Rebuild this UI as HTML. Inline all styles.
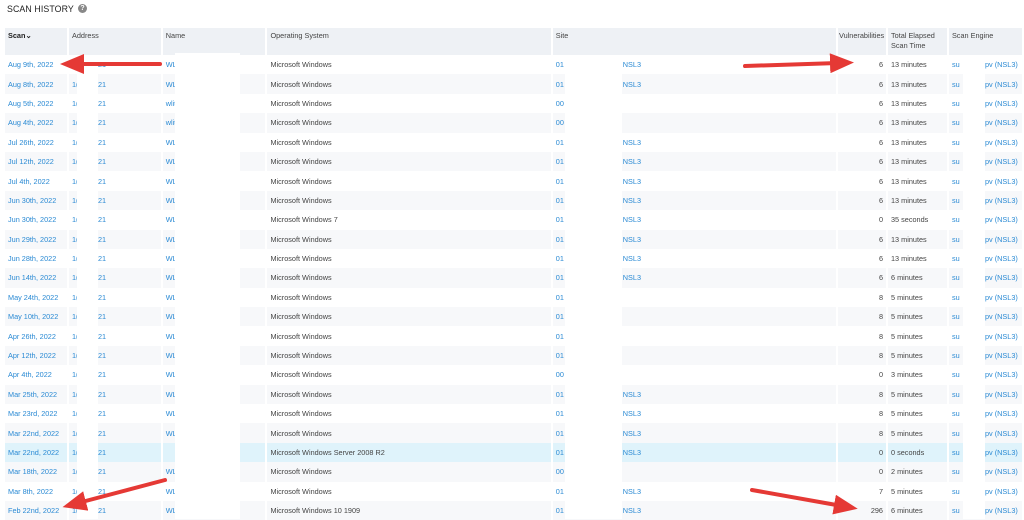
<!DOCTYPE html>
<html><head><meta charset="utf-8"><style>
body{margin:0;width:1024px;height:519px;overflow:hidden;background:#fff;font-family:"Liberation Sans",sans-serif;position:relative}
h1{position:absolute;left:7px;top:4px;margin:0;font-size:8.8px;font-weight:normal;color:#222;letter-spacing:.1px}
.q{position:absolute;left:78px;top:4px;width:9px;height:9px;border-radius:50%;background:#888;color:#fff;font-size:7px;font-weight:bold;text-align:center;line-height:9px}
table{position:absolute;left:3px;top:28px;border-collapse:separate;border-spacing:2px 0;table-layout:fixed;font-size:7.3px;color:#444}
th{background:#eef1f5;font-weight:normal;text-align:left;vertical-align:top;height:27px;padding:3px 3px 0;box-sizing:border-box;line-height:10px}
td{height:19.4px;padding:0 3px;white-space:nowrap;overflow:hidden;box-sizing:border-box}
tr:nth-child(even) td{background:#f7f8fa}
tr.hl td{background:#dff3fb!important}
.l{color:#2a8ad4}.r{text-align:right}
.m{position:absolute;background:#fff}
i{font-style:normal;display:inline-block}
</style></head><body>
<h1>SCAN HISTORY</h1><div class="q">?</div>
<table>
<colgroup><col style="width:62px"><col style="width:92px"><col style="width:103px"><col style="width:284px"><col style="width:284px"><col style="width:48px"><col style="width:59px"><col style="width:73px"></colgroup>
<thead><tr><th style="color:#222;font-weight:bold">Scan⌄</th><th>Address</th><th>Name</th><th>Operating System</th><th>Site</th><th style="padding:3px 1px 0">Vulnerabilities</th><th>Total Elapsed Scan Time</th><th>Scan Engine</th></tr></thead>
<tbody></tbody></table>
<script>
var R=[["Aug 9th, 2022","WLI","Microsoft Windows","01","NSL3","6","13 minutes"],
["Aug 8th, 2022","WLI","Microsoft Windows","01","NSL3","6","13 minutes"],
["Aug 5th, 2022","wlit","Microsoft Windows","00","","6","13 minutes"],
["Aug 4th, 2022","wlit","Microsoft Windows","00","","6","13 minutes"],
["Jul 26th, 2022","WLI","Microsoft Windows","01","NSL3","6","13 minutes"],
["Jul 12th, 2022","WLI","Microsoft Windows","01","NSL3","6","13 minutes"],
["Jul 4th, 2022","WLI","Microsoft Windows","01","NSL3","6","13 minutes"],
["Jun 30th, 2022","WLI","Microsoft Windows","01","NSL3","6","13 minutes"],
["Jun 30th, 2022","WLI","Microsoft Windows 7","01","NSL3","0","35 seconds"],
["Jun 29th, 2022","WLI","Microsoft Windows","01","NSL3","6","13 minutes"],
["Jun 28th, 2022","WLI","Microsoft Windows","01","NSL3","6","13 minutes"],
["Jun 14th, 2022","WLI","Microsoft Windows","01","NSL3","6","6 minutes"],
["May 24th, 2022","WLI","Microsoft Windows","01","","8","5 minutes"],
["May 10th, 2022","WLI","Microsoft Windows","01","","8","5 minutes"],
["Apr 26th, 2022","WLI","Microsoft Windows","01","","8","5 minutes"],
["Apr 12th, 2022","WLI","Microsoft Windows","01","","8","5 minutes"],
["Apr 4th, 2022","WLI","Microsoft Windows","00","","0","3 minutes"],
["Mar 25th, 2022","WLI","Microsoft Windows","01","NSL3","8","5 minutes"],
["Mar 23rd, 2022","WLI","Microsoft Windows","01","NSL3","8","5 minutes"],
["Mar 22nd, 2022","WLI","Microsoft Windows","01","NSL3","8","5 minutes"],
["Mar 22nd, 2022","","Microsoft Windows Server 2008 R2","01","NSL3","0","0 seconds"],
["Mar 18th, 2022","WLI","Microsoft Windows","00","","0","2 minutes"],
["Mar 8th, 2022","WLI","Microsoft Windows","01","NSL3","7","5 minutes"],
["Feb 22nd, 2022","WLI","Microsoft Windows 10 1909","01","NSL3","296","6 minutes"]];
var s="";
R.forEach(function(r,i){s+='<tr'+(i==20?' class="hl"':'')+'><td class="l">'+r[0]+'</td><td class="l"><i style="width:26px">1(</i>21</td><td class="l">'+r[1]+'</td><td>'+r[2]+'</td><td class="l"><i style="width:67px">'+r[3]+'</i>'+r[4]+'</td><td class="r">'+r[5]+'</td><td>'+r[6]+'</td><td class="l"><i style="width:31px">su</i>:pv (NSL3)</td></tr>';});
document.querySelector('tbody').innerHTML=s;
</script>
<div class="m" style="left:77px;top:56px;width:21px;height:463px"></div>
<div class="m" style="left:175px;top:53px;width:65px;height:466px"></div>
<div class="m" style="left:565px;top:56px;width:57px;height:463px"></div>
<div class="m" style="left:963px;top:56px;width:22px;height:463px"></div>
<svg style="position:absolute;left:0;top:0" width="1024" height="519">
<defs><marker id="a" markerWidth="6" markerHeight="5" refX="2" refY="2.5" orient="auto"><path d="M0,0 L6,2.5 L0,5z" fill="#e53935"/></marker></defs>
<g stroke="#e53935" stroke-width="4" stroke-linecap="round" marker-end="url(#a)">
<line x1="160" y1="64" x2="76" y2="64"/>
<line x1="745" y1="66" x2="838" y2="63"/>
<line x1="165" y1="480" x2="78" y2="503"/>
<line x1="752" y1="490" x2="842" y2="506"/>
</g></svg>
</body></html>
